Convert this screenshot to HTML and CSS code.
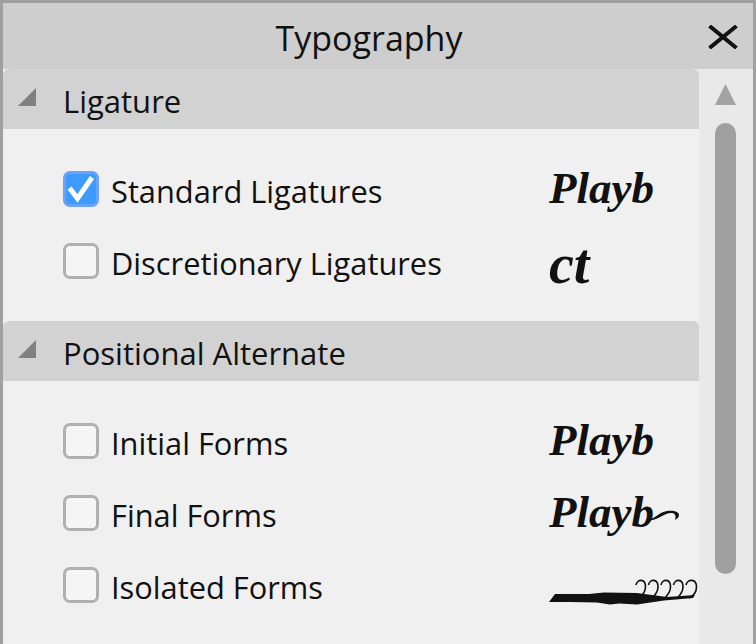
FILE: index.html
```html
<!DOCTYPE html>
<html lang="en">
<head>
<meta charset="utf-8">
<title>Typography</title>
<link rel="stylesheet" href="styles.css">
</head>
<body>
<div class="window">
  <header class="titlebar">
    <h1 class="title">Typography</h1>
    <button class="close" aria-label="Close">
      <svg width="30" height="24" viewBox="0 0 30 24"><path d="M1.500 1 L28.500 23 M28.500 1 L1.500 23" fill="none" stroke="#111" stroke-width="4"/></svg>
    </button>
  </header>
  <div class="main">
    <div class="content">
      <section class="group">
        <div class="group-head">
          <svg class="twisty" width="18" height="18" viewBox="0 0 18 18"><path d="M18 0 V18 H0 Z" fill="#808080"/></svg>
          <span class="group-name">Ligature</span>
        </div>
        <div class="rows">
          <label class="row">
            <span class="box checked">
              <svg width="30" height="30" viewBox="0 0 30 30"><path d="M3.500 14 L11.500 24.500 L26 3.500" fill="none" stroke="#fff" stroke-width="5"/></svg>
            </span>
            <span class="name">Standard Ligatures</span>
            <span class="sample">Playb</span>
          </label>
          <label class="row">
            <span class="box"></span>
            <span class="name">Discretionary Ligatures</span>
            <span class="sample sample-large">ct</span>
          </label>
        </div>
      </section>
      <section class="group">
        <div class="group-head">
          <svg class="twisty" width="18" height="18" viewBox="0 0 18 18"><path d="M18 0 V18 H0 Z" fill="#808080"/></svg>
          <span class="group-name">Positional Alternate</span>
        </div>
        <div class="rows">
          <label class="row">
            <span class="box"></span>
            <span class="name">Initial Forms</span>
            <span class="sample">Playb</span>
          </label>
          <label class="row">
            <span class="box"></span>
            <span class="name">Final Forms</span>
            <span class="sample">Playb<svg class="tail" width="34" height="14" viewBox="0 0 34 14"><path d="M0 11 C8 11 13 3 21 2 C28 1 33 3 33 6 C33 8 31 10 29 11 C30 8 30 4.500 26 4 C19 3 12 11.800 0 11.800 Z" fill="#111"/></svg></span>
          </label>
          <label class="row">
            <span class="box"></span>
            <span class="name">Isolated Forms</span>
            <span class="swash">
              <svg width="150" height="32" viewBox="0 0 150 32"><path d="M0 24 L6 16 L40 16 L55 14.500 L88 15 L118 19 L146 17 L144 20 L115 22.500 L88 26.500 L70 25.500 L61 26.500 L48 24.500 L20 24 Z" fill="#111"/><path d="M87 7 C88 1 96.500 0 96.500 9 C96.500 14 93 18 90 21 M99.500 7 C100.500 1 109 0 109 9 C109 14 105.500 18 102.500 21 M112 7 C113 1 121.500 0 121.500 9 C121.500 14 118 18 115 21 M124.500 7 C125.500 1 134 0 134 9 C134 14 130.500 18 127.500 21 M137 7 C138 1 147.500 0 147.500 9 C147.500 14 144 18 140 20" fill="none" stroke="#111" stroke-width="1.600"/></svg>
            </span>
          </label>
        </div>
      </section>
    </div>
    <div class="scrollbar">
      <svg class="arrow" width="21" height="21" viewBox="0 0 21 21"><path d="M10.500 0 L21 21 H0 Z" fill="#a3a3a3"/></svg>
      <div class="thumb"></div>
    </div>
  </div>
</div>
</body>
</html>
```
FILE: styles.css
```css
html, body {
  margin: 0;
  height: 100%;
  overflow: hidden;
}
body {
  font-family: "Open Sans", "Noto Sans", sans-serif;
  color: #111;
}
.window {
  box-sizing: border-box;
  width: 756px;
  height: 644px;
  border: 3px solid #a0a0a0;
  border-bottom: 0;
  display: flex;
  flex-direction: column;
  background: #cecece;
}
.titlebar {
  height: 66px;
  flex: none;
  display: flex;
  align-items: center;
  padding-left: 27px;
  padding-right: 15px;
}
.title {
  flex: 1;
  margin: 4px 0 0;
  text-align: center;
  font-size: 34px;
  font-weight: 400;
  line-height: 62px;
}
.close {
  width: 30px;
  height: 24px;
  padding: 0;
  border: 0;
  background: none;
  display: block;
  margin-top: 1px;
}
.close svg, .box svg { display: block; }
.main {
  flex: 1;
  min-height: 0;
  display: flex;
  background: #e9e9e9;
}
.content {
  width: 696px;
  flex: none;
  background: #f0f0f0;
  border-top-right-radius: 6px;
  overflow: hidden;
}
.group-head {
  height: 60px;
  display: flex;
  align-items: center;
  gap: 28px;
  padding-left: 15px;
  background: #d2d2d2;
  border-radius: 6px 6px 0 0;
  font-size: 31px;
}
.group-name { margin-left: -1px; margin-top: 3px; }
.twisty { flex: none; margin-top: -5px; }
.rows {
  padding: 26px 0 22px 60px;
}
.row {
  height: 72px;
  display: flex;
  align-items: center;
  font-size: 30.800px;
}
.box {
  box-sizing: border-box;
  width: 36px;
  height: 36px;
  flex: none;
  border: 3px solid #b0b0b0;
  border-radius: 7px;
  background: #f5f5f5;
  margin-right: 12px;
  margin-top: -4px;
}
.box.checked {
  background: #3d9bff;
  border-color: #69a2fb;
}
.name { width: 438px; flex: none; }
.sample {
  font-family: "Liberation Serif", serif;
  font-style: italic;
  font-weight: 700;
  font-size: 45px;
  line-height: 72px;
  display: flex;
  align-items: center;
  color: #111;
  margin-top: -7px;
}
.sample-large {
  font-size: 56px;
  margin-top: 2px;
}
.tail { margin: 9px 0 0 -8px; flex: none; }
.swash { display: block; width: 150px; height: 32px; margin-top: 13px; }
.swash svg { display: block; }
.scrollbar {
  flex: 1;
  padding: 15px 17px 0 16px;
}
.arrow { display: block; }
.thumb {
  width: 21px;
  height: 451px;
  margin-top: 18px;
  background: #a0a0a0;
  border-radius: 11px;
}
```
